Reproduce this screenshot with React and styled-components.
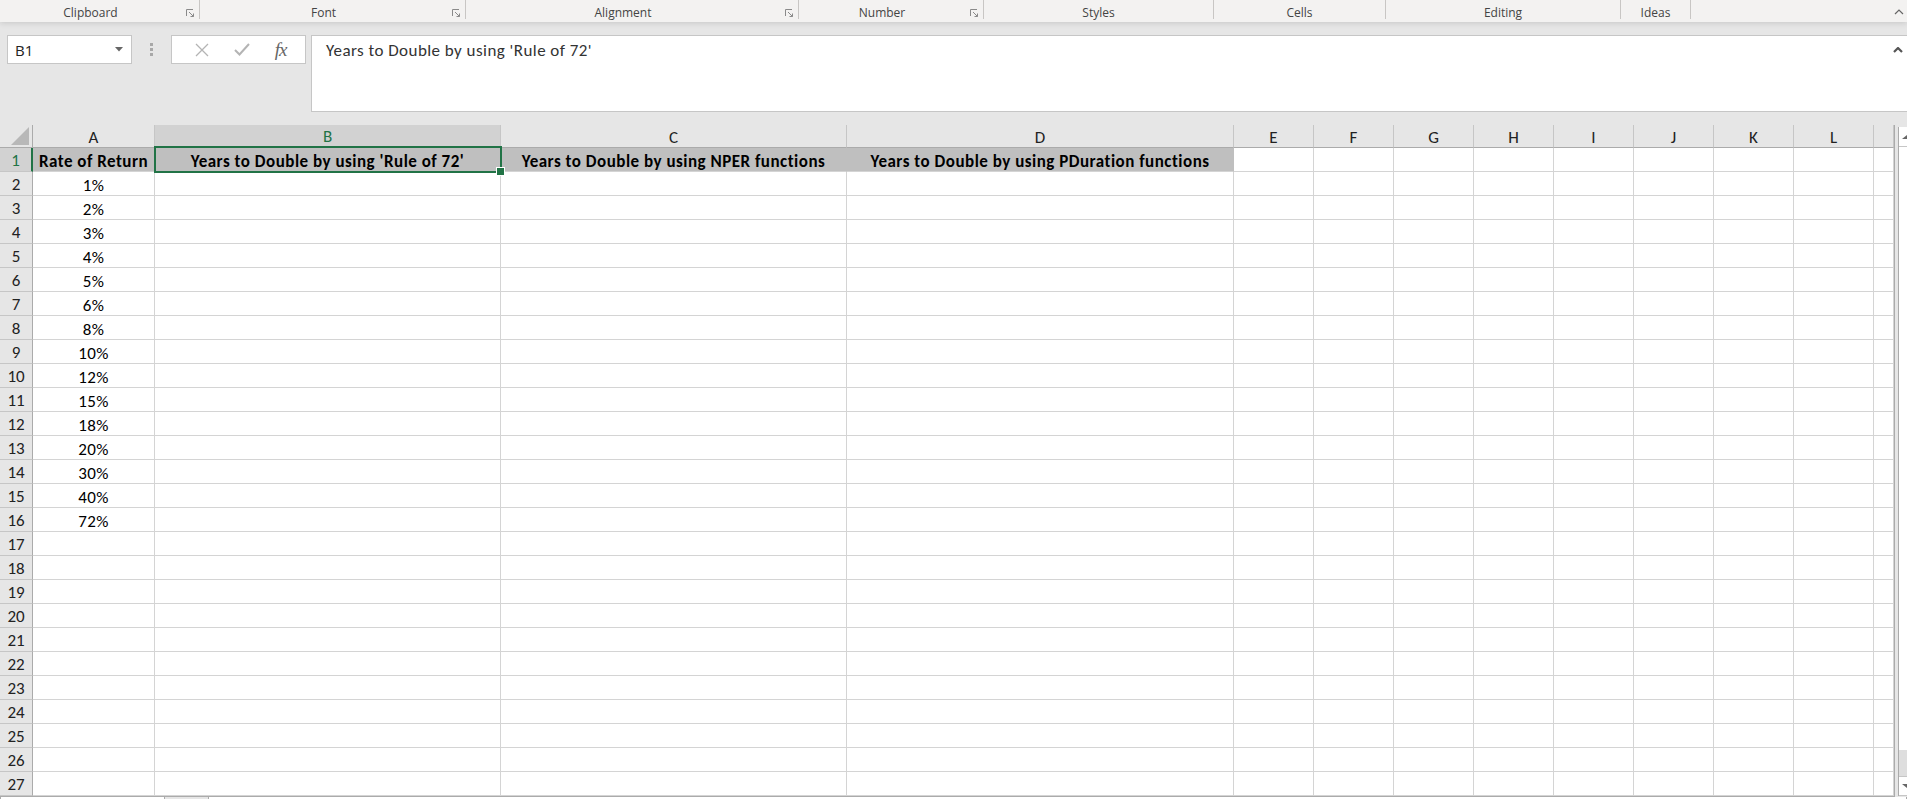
import React from "react";
import styled, { createGlobalStyle } from "styled-components";

const GlobalStyle = createGlobalStyle`
  html, body {
    margin: 0;
    padding: 0;
    background: #e6e6e6;
    overflow: hidden;
  }
  * { box-sizing: border-box; }
`;

const CELL_FONT = `Calibri, Carlito, Lato, "Liberation Sans", sans-serif`;
const UI_FONT = `"Segoe UI", "Open Sans", "Noto Sans", sans-serif`;
const GREEN = "#217346";

const groups = [
  { name: "Clipboard", width: 200, launcher: true },
  { name: "Font", width: 266, launcher: true },
  { name: "Alignment", width: 333, launcher: true },
  { name: "Number", width: 185, launcher: true },
  { name: "Styles", width: 230 },
  { name: "Cells", width: 172 },
  { name: "Editing", width: 235 },
  { name: "Ideas", width: 70 },
];

const columns = [
  { key: "A", width: 122 },
  { key: "B", width: 346 },
  { key: "C", width: 346 },
  { key: "D", width: 387 },
  { key: "E", width: 80 },
  { key: "F", width: 80 },
  { key: "G", width: 80 },
  { key: "H", width: 80 },
  { key: "I", width: 80 },
  { key: "J", width: 80 },
  { key: "K", width: 80 },
  { key: "L", width: 80 },
  { key: "", width: 20 },
];

const headings = [
  "Rate of Return",
  "Years to Double by using 'Rule of 72'",
  "Years to Double by using NPER functions",
  "Years to Double by using PDuration functions",
];

const rates = ["1%", "2%", "3%", "4%", "5%", "6%", "8%", "10%", "12%", "15%", "18%", "20%", "30%", "40%", "72%"];

const ROWS = 27;
const template = `33px ${columns.map((c) => c.width + "px").join(" ")}`;

// ---------- ribbon ----------
const Ribbon = styled.div`
  position: relative;
  z-index: 1;
  height: 22px;
  display: flex;
  align-items: flex-start;
  background: #f3f2f1;
  box-shadow: 0 1px 6px rgba(0, 0, 0, 0.14);
`;

const Group = styled.div`
  width: ${(p) => p.$width}px;
  height: 19px;
  display: flex;
  align-items: center;
  border-right: 1px solid #c8c6c4;
`;

const GroupLabel = styled.span`
  flex: 1;
  text-align: center;
  font-family: ${UI_FONT};
  font-size: 12px;
  color: #444;
  padding-top: 5px;
`;

const Launcher = styled.span`
  width: 18px;
  display: flex;
  justify-content: center;
  padding-top: 7px;
`;

const Collapse = styled.span`
  margin-left: auto;
  width: 16px;
  display: flex;
  justify-content: center;
  padding-top: 9px;
`;

// ---------- formula bar ----------
const FormulaArea = styled.div`
  display: flex;
  align-items: flex-start;
  padding: 13px 0 13px 7px;
  height: 103px;
`;

const NameBox = styled.div`
  width: 125px;
  height: 29px;
  background: #fff;
  border: 1px solid #c6c6c6;
  display: flex;
  align-items: center;
  padding: 0 8px 0 7px;
  font-family: ${UI_FONT};
  font-size: 15px;
  color: #222;
  justify-content: space-between;
`;

const Dots = styled.div`
  width: 39px;
  height: 29px;
  display: flex;
  flex-direction: column;
  align-items: center;
  justify-content: center;
  gap: 2px;

  span {
    width: 3px;
    height: 3px;
    background: #a8a8a8;
  }
`;

const FxBox = styled.div`
  width: 135px;
  height: 29px;
  background: #fff;
  border: 1px solid #c6c6c6;
  display: flex;
  align-items: center;
  justify-content: space-around;
  padding: 0 6px 0 10px;
`;

const Fx = styled.span`
  font-family: "Liberation Serif", serif;
  font-style: italic;
  font-size: 19px;
  color: #666;
  letter-spacing: -1px;
`;

const FormulaInput = styled.div`
  flex: 1;
  margin-left: 5px;
  height: 77px;
  background: #fff;
  border: 1px solid #c6c6c6;
  border-right: none;
  display: flex;
  align-items: flex-start;
  padding: 4px 0 0 14px;
  font-family: ${CELL_FONT};
  font-size: 17px;
  letter-spacing: 0.45px;
  color: #333;
`;

const FormulaText = styled.span`
  flex: 1;
`;

const FormulaCaret = styled.span`
  width: 14px;
  display: flex;
  padding-top: 7px;
`;

// ---------- sheet ----------
const SheetArea = styled.div`
  display: flex;
  height: 672px;
`;

const Grid = styled.div`
  width: 1895px;
  display: grid;
  grid-template-columns: ${template};
  grid-template-rows: 23px repeat(${ROWS}, 24px);
  background: #fff;
  border-right: 1px solid #ababab;
  border-bottom: 1px solid #ababab;
`;

const Corner = styled.div`
  background: #e6e6e6;
  border-right: 1px solid #ababab;
  border-bottom: 1px solid #ababab;
  display: flex;
  align-items: flex-end;
  justify-content: flex-end;
  padding: 0 3px 2px 0;
`;

const ColHead = styled.div`
  background: ${(p) => (p.$active ? "#d2d2d2" : "#e6e6e6")};
  border-right: 1px solid #c6c6c6;
  border-bottom: ${(p) => (p.$active ? `2px solid ${GREEN}` : "1px solid #ababab")};
  color: ${(p) => (p.$active ? GREEN : "#222")};
  font-family: ${CELL_FONT};
  font-size: 17px;
  display: flex;
  align-items: center;
  justify-content: center;
  padding-top: 2px;
`;

const RowHead = styled.div`
  background: ${(p) => (p.$active ? "#d2d2d2" : "#e6e6e6")};
  border-right: ${(p) => (p.$active ? `2px solid ${GREEN}` : "1px solid #ababab")};
  border-bottom: 1px solid #c6c6c6;
  color: ${(p) => (p.$active ? GREEN : "#222")};
  font-family: ${CELL_FONT};
  font-size: 17px;
  display: flex;
  align-items: center;
  justify-content: center;
  padding-top: 2px;
`;

const Cell = styled.div`
  position: relative;
  background: ${(p) => (p.$fill ? "#bfbfbf" : "#fff")};
  border-right: 1px solid ${(p) => (p.$fill ? "#bfbfbf" : "#d4d4d4")};
  border-bottom: 1px solid #d4d4d4;
  font-family: ${CELL_FONT};
  font-size: 17px;
  letter-spacing: ${(p) => (p.$bold ? "0.5px" : "0.3px")};
  font-weight: ${(p) => (p.$bold ? 700 : 400)};
  color: #000;
  display: flex;
  align-items: center;
  justify-content: center;
  padding-top: 3px;
  white-space: nowrap;
  overflow: visible;
`;

const Selection = styled.div`
  position: absolute;
  z-index: 2;
  top: -2px;
  left: -1px;
  right: -2px;
  bottom: -2px;
  border: 2px solid ${GREEN};
  pointer-events: none;

  &::after {
    content: "";
    position: absolute;
    right: -5px;
    bottom: -5px;
    width: 7px;
    height: 7px;
    background: ${GREEN};
    border: 1px solid #fff;
  }
`;

const Scrollbar = styled.div`
  margin: 2px 0 0 3px;
  width: 9px;
  display: flex;
  flex-direction: column;
  background: #fff;
  border-left: 1px solid #ababab;
  height: 669px;
`;

const ScrollButton = styled.div`
  height: 20px;
  border-bottom: 1px solid #c6c6c6;
  border-top: ${(p) => (p.$down ? "1px solid #c6c6c6" : "none")};
  display: flex;
  align-items: center;
  justify-content: center;
  padding-left: 2px;
`;

const Track = styled.div`
  flex: 1;
  display: flex;
  flex-direction: column;
  justify-content: flex-end;
`;

const TrackShade = styled.div`
  height: 26px;
  background: #dedede;
`;

const TabStrip = styled.div`
  height: 2px;
  display: flex;
  background: #e6e6e6;
`;

const TabBox = styled.div`
  width: ${(p) => (p.$width ? p.$width + "px" : "auto")};
  flex: ${(p) => (p.$width ? "none" : 1)};
  margin-left: ${(p) => p.$offset || 0}px;
  background: #fff;
  border-left: 1px solid #ababab;
  border-right: 1px solid #ababab;
`;

const LauncherIcon = () => (
  <svg width="9" height="9" viewBox="0 0 9 9">
    <path d="M0.5 7V0.5H7" fill="none" stroke="#8a8a8a" />
    <path d="M3 3L7.5 7.5M7.5 4.5V7.5H4.5" fill="none" stroke="#8a8a8a" />
  </svg>
);

const Chevron = ({ color = "#666", width = 1.2 }) => (
  <svg width="10" height="6" viewBox="0 0 10 6">
    <path d="M1 5L5 1L9 5" fill="none" stroke={color} strokeWidth={width} />
  </svg>
);

const App = () => {
  return (
    <>
      <GlobalStyle />
      <Ribbon>
        {groups.map((g) => (
          <Group key={g.name} $width={g.width}>
            <GroupLabel>{g.name}</GroupLabel>
            {g.launcher && (
              <Launcher>
                <LauncherIcon />
              </Launcher>
            )}
          </Group>
        ))}
        <Collapse>
          <Chevron />
        </Collapse>
      </Ribbon>

      <FormulaArea>
        <NameBox>
          B1
          <svg width="8" height="5" viewBox="0 0 8 5">
            <path d="M0 0H8L4 4.5Z" fill="#666" />
          </svg>
        </NameBox>
        <Dots>
          <span />
          <span />
          <span />
        </Dots>
        <FxBox>
          <svg width="14" height="14" viewBox="0 0 14 14">
            <path d="M1 1L13 13M13 1L1 13" stroke="#b4b4b4" strokeWidth="1.3" />
          </svg>
          <svg width="16" height="13" viewBox="0 0 16 13">
            <path d="M1 7L5.5 11.5L15 1" fill="none" stroke="#b4b4b4" strokeWidth="2" />
          </svg>
          <Fx>fx</Fx>
        </FxBox>
        <FormulaInput>
          <FormulaText>Years to Double by using 'Rule of 72'</FormulaText>
          <FormulaCaret>
            <Chevron color="#555" width={2.2} />
          </FormulaCaret>
        </FormulaInput>
      </FormulaArea>

      <SheetArea>
        <Grid>
          <Corner>
            <svg width="18" height="18" viewBox="0 0 18 18">
              <path d="M18 0V18H0Z" fill="#b8b8b8" />
            </svg>
          </Corner>
          {columns.map((c) => (
            <ColHead key={"h" + c.key + c.width} $active={c.key === "B"}>
              {c.key}
            </ColHead>
          ))}
          {Array.from({ length: ROWS }, (_, r) => (
            <React.Fragment key={r}>
              <RowHead $active={r === 0}>{r + 1}</RowHead>
              {columns.map((c, ci) => {
                const isHeading = r === 0 && ci < 4;
                let text = "";
                if (isHeading) text = headings[ci];
                else if (ci === 0 && r >= 1 && r <= rates.length) text = rates[r - 1];
                return (
                  <Cell key={ci} $fill={isHeading} $bold={isHeading}>
                    {text}
                    {r === 0 && ci === 1 && <Selection />}
                  </Cell>
                );
              })}
            </React.Fragment>
          ))}
        </Grid>
        <Scrollbar>
          <ScrollButton>
            <svg width="5" height="4" viewBox="0 0 5 4">
              <path d="M0 4L5 0V4Z" fill="#666" />
            </svg>
          </ScrollButton>
          <Track>
            <TrackShade />
          </Track>
          <ScrollButton $down>
            <svg width="5" height="4" viewBox="0 0 5 4">
              <path d="M0 0H5V4Z" fill="#666" />
            </svg>
          </ScrollButton>
        </Scrollbar>
      </SheetArea>
      <TabStrip>
        <TabBox $width={165} />
        <TabBox $offset={43} />
      </TabStrip>
    </>
  );
};

export default App;
